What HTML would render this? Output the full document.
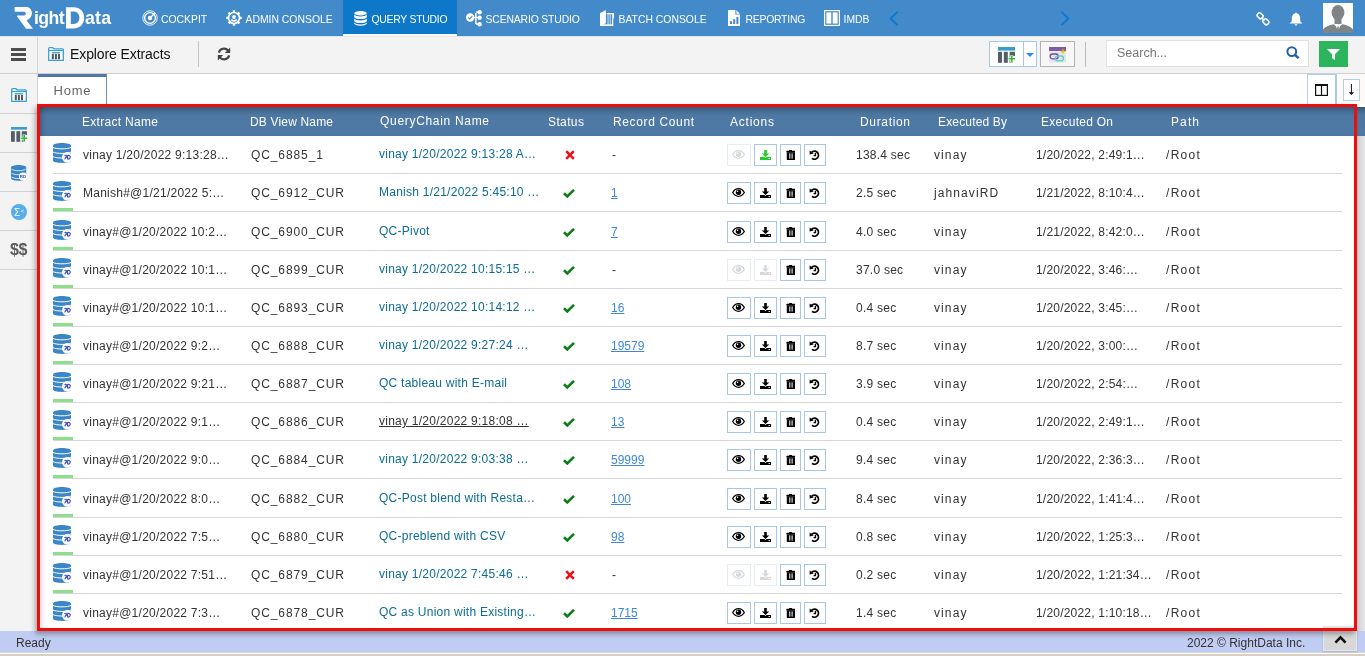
<!DOCTYPE html>
<html><head><meta charset="utf-8">
<style>
*{box-sizing:border-box}
html,body{margin:0;padding:0}
body{width:1365px;height:656px;overflow:hidden;position:relative;background:#f3f3f3;font-family:"Liberation Sans",sans-serif;color:#333}
.abs{position:absolute}
#nav{position:absolute;left:0;top:0;width:1365px;height:36px;background:#428ac9}
.ni{position:absolute;top:0;height:36px;color:#fff;font-size:10.5px;white-space:nowrap}
.ni .tx{position:absolute;top:14px;line-height:12px}
.ni svg{position:absolute}
#tb{position:absolute;left:0;top:36px;width:1365px;height:38px;background:#f3f3f3;border-top:1px solid #e6e6e6;border-bottom:1px solid #cfcfcf}
#side{position:absolute;left:0;top:74px;width:38px;height:558px;background:#f3f3f3;border-right:1px solid #d3d3d3}
.sep{position:absolute;left:0;width:37px;height:1px;background:#d3d3d3}
#tabs{position:absolute;left:38px;top:74px;width:1327px;height:30px;background:#fff}
#panel{position:absolute;left:37px;top:104px;width:1328px;height:528px;background:#fff}
#thead{position:absolute;left:40px;top:107px;width:1325px;height:29px;background:#4e79a4;box-shadow:inset 0 7px 6px -4px rgba(0,0,0,.32), inset 5px 0 5px -3px rgba(0,0,0,.22)}
.th{position:absolute;top:8px;color:#fff;font-size:12px;line-height:14px;white-space:nowrap}
#body{position:absolute;left:0;top:0;width:1365px;height:628px;overflow:hidden;clip-path:inset(135px 0 0 40px)}
.row{position:absolute;left:0;width:1342px;height:39px}
.row::after{content:"";position:absolute;left:53px;right:0;bottom:0;height:1px;background:#d6d6d6}
.t{position:absolute;top:13px;font-size:12px;line-height:14px;color:#333;white-space:nowrap;letter-spacing:0.25px}
.q{color:#0c6c96;top:12px}
.hov{color:#333;text-decoration:underline}
.lnk{color:#3f87dc;text-decoration:underline;letter-spacing:0}
#red{position:absolute;left:37px;top:104px;width:1320px;height:527px;border:3px solid #ee0d0d;box-shadow:-2px 3px 5px rgba(0,0,0,.32)}
#status{position:absolute;left:0;top:631px;width:1365px;height:21px;background:#c1ccf2}
#bottom{position:absolute;left:0;top:652px;width:1365px;height:4px;background:linear-gradient(#dbd6cd 0,#dbd6cd 1px,#fbfbfa 1px,#fbfbfa 2px,#d4d0c8 2px)}
#wrap{position:absolute;left:0;top:0;width:1365px;height:656px;overflow:hidden;will-change:transform}
</style></head><body><div id="wrap">

<!-- ============ NAV ============ -->
<div id="nav">
  <!-- logo -->
  <svg class="abs" style="left:0;top:0" width="40" height="36" viewBox="0 0 40 36"><path d="M14.6 7H26C29.5 7 31.9 9.5 31.9 13.2C31.9 16.5 29.8 19.2 26.5 20.2L32.9 28.8H26.1L17.1 16.4V15.5H24C25.3 15.5 25.8 14.5 25.8 13.6C25.8 12.5 25.2 11.7 24 11.7H14.6Z" fill="#fff"/></svg>
  <span class="abs" style="left:34px;top:8px;font-size:17.7px;font-weight:bold;color:#fff;letter-spacing:-0.6px;line-height:20px">ight</span>
  <svg class="abs" style="left:66px;top:7px" width="20" height="22" viewBox="0 0 20 22">
      <path d="M0 0.2H7.6C14 0.2 18.2 4.6 18.2 10.8S14 21.4 7.6 21.4H0Z M4.8 4.6V17H7.4C11.2 17 13.4 14.4 13.4 10.8S11.2 4.6 7.4 4.6Z" fill="#fff" fill-rule="evenodd"/>
  </svg>
  <span class="abs" style="left:85px;top:8px;font-size:17.7px;font-weight:bold;color:#fff;letter-spacing:0.2px;line-height:20px">ata</span>
  <!-- cockpit -->
  <div class="ni" style="left:142px;width:70px">
    <svg style="left:0;top:10px" width="16" height="16" viewBox="0 0 16 16"><circle cx="8" cy="8" r="7.2" fill="none" stroke="#fff" stroke-width="0.9"/><circle cx="8" cy="8" r="5.4" fill="none" stroke="#fff" stroke-width="1.4"/><circle cx="8" cy="8" r="2.2" fill="#fff"/><path d="M8 8L13 3" stroke="#fff" stroke-width="1.2"/></svg>
    <span class="tx" style="left:19px;font-size:10.4px">COCKPIT</span>
  </div>
  <!-- admin console -->
  <div class="ni" style="left:226px;width:112px">
    <svg style="left:0;top:9.5px" width="16" height="16" viewBox="0 0 16 16"><rect x="6.8" y="0.3" width="2.4" height="2.6" fill="#fff" transform="rotate(0 8 8)"/><rect x="6.8" y="0.3" width="2.4" height="2.6" fill="#fff" transform="rotate(45 8 8)"/><rect x="6.8" y="0.3" width="2.4" height="2.6" fill="#fff" transform="rotate(90 8 8)"/><rect x="6.8" y="0.3" width="2.4" height="2.6" fill="#fff" transform="rotate(135 8 8)"/><rect x="6.8" y="0.3" width="2.4" height="2.6" fill="#fff" transform="rotate(180 8 8)"/><rect x="6.8" y="0.3" width="2.4" height="2.6" fill="#fff" transform="rotate(225 8 8)"/><rect x="6.8" y="0.3" width="2.4" height="2.6" fill="#fff" transform="rotate(270 8 8)"/><rect x="6.8" y="0.3" width="2.4" height="2.6" fill="#fff" transform="rotate(315 8 8)"/><circle cx="8" cy="8" r="5.5" fill="none" stroke="#fff" stroke-width="1.7"/><circle cx="8" cy="7" r="1.9" fill="#fff"/><path d="M5.2 9.6Q8 12.2 10.8 9.6" fill="none" stroke="#fff" stroke-width="1.5"/></svg>
    <span class="tx" style="left:19.5px;font-size:10.4px">ADMIN CONSOLE</span>
  </div>
  <!-- query studio active -->
  <div class="ni" style="left:343px;width:114px;background:#0d77c9;border-bottom:2px solid #f5faff">
    <svg style="left:11px;top:11px" width="13" height="15" viewBox="0 0 13 15"><ellipse cx="6.5" cy="2.2" rx="6.3" ry="2.2" fill="#fff"/><path d="M0.2 3.6C1 4.9 3.6 5.5 6.5 5.5S12 4.9 12.8 3.6V6.2C12 7.5 9.4 8.1 6.5 8.1S1 7.5 0.2 6.2Z" fill="#fff"/><path d="M0.2 7.6C1 8.9 3.6 9.5 6.5 9.5S12 8.9 12.8 7.6V10.2C12 11.5 9.4 12.1 6.5 12.1S1 11.5 0.2 10.2Z" fill="#fff"/><path d="M0.2 11.6C1 12.9 3.6 13.5 6.5 13.5S12 12.9 12.8 11.6V12.8C12 14.1 9.4 14.8 6.5 14.8S1 14.1 0.2 12.8Z" fill="#fff"/></svg>
    <span class="tx" style="left:28.5px;font-size:10.4px;letter-spacing:-0.25px">QUERY STUDIO</span>
  </div>
  <!-- scenario studio -->
  <div class="ni" style="left:466px;width:120px">
    <svg style="left:0;top:9.5px" width="17" height="17" viewBox="0 0 17 17"><circle cx="4.2" cy="7.5" r="4.2" fill="#fff"/><path d="M2.3 7.5L3.7 8.9 6.2 6.2" stroke="#428ac9" stroke-width="1.1" fill="none"/><rect x="9" y="3" width="1.6" height="11" fill="#fff"/><path d="M8 7.5H12" stroke="#fff" stroke-width="1.2"/><circle cx="13.6" cy="2.2" r="2.2" fill="#fff"/><circle cx="13.6" cy="7.8" r="2.2" fill="#fff"/><circle cx="13.6" cy="14.2" r="2.2" fill="#fff"/><path d="M10 2.2H12M10 14.2H12" stroke="#fff" stroke-width="1.2"/></svg>
    <span class="tx" style="left:19.5px;font-size:10.4px;letter-spacing:-0.15px">SCENARIO STUDIO</span>
  </div>
  <!-- batch console -->
  <div class="ni" style="left:599px;width:112px">
    <svg style="left:0;top:10px" width="16" height="16" viewBox="0 0 16 16"><path d="M1 3.2L6.9 0V13.2L1 16Z" fill="#fff"/><rect x="7.6" y="3" width="7.4" height="1.4" fill="#fff"/><rect x="13.2" y="3" width="1.8" height="5.5" fill="#fff"/><rect x="13" y="8.5" width="1.2" height="7.5" fill="#fff"/><rect x="1" y="14.3" width="13.2" height="1.7" fill="#fff"/><rect x="8.4" y="4.4" width="1.3" height="10" fill="#fff" opacity=".6"/><rect x="10.6" y="4.4" width="1.3" height="10" fill="#fff" opacity=".6"/></svg>
    <span class="tx" style="left:19.5px;font-size:10.4px">BATCH CONSOLE</span>
  </div>
  <!-- reporting -->
  <div class="ni" style="left:728px;width:82px">
    <svg style="left:0;top:10px" width="12" height="16" viewBox="0 0 12 16"><path d="M0 0.4Q0 0 0.4 0H7.4V4.6H12V15.6Q12 16 11.6 16H0.4Q0 16 0 15.6Z" fill="#fff"/><path d="M8.4 0.3L11.9 3.7H8.4Z" fill="#fff"/><rect x="2" y="11.2" width="2" height="2.8" fill="#428ac9"/><rect x="5.2" y="9.2" width="2" height="4.8" fill="#428ac9"/><rect x="8.4" y="7" width="2" height="7" fill="#428ac9"/></svg>
    <span class="tx" style="left:17.5px;font-size:10.4px;letter-spacing:-0.23px">REPORTING</span>
  </div>
  <!-- imdb -->
  <div class="ni" style="left:824px;width:50px">
    <svg style="left:0;top:10px" width="16" height="16" viewBox="0 0 16 16"><rect x="0.6" y="0.6" width="14.8" height="14.8" fill="none" stroke="#fff" stroke-width="1.2"/><rect x="2.4" y="2.4" width="4.9" height="11.2" fill="#fff"/><rect x="8.7" y="2.4" width="4.9" height="11.2" fill="#fff"/></svg>
    <span class="tx" style="left:19.5px;font-size:10.4px">IMDB</span>
  </div>
  <!-- arrows -->
  <svg class="abs" style="left:889px;top:11px" width="10" height="15" viewBox="0 0 10 15"><path d="M8.5 0.8L1.6 7.5 8.5 14.2" fill="none" stroke="#0b78d1" stroke-width="1.8"/></svg>
  <svg class="abs" style="left:1060px;top:11px" width="10" height="15" viewBox="0 0 10 15"><path d="M1.5 0.8L8.4 7.5 1.5 14.2" fill="none" stroke="#0b78d1" stroke-width="1.8"/></svg>
  <!-- link -->
  <svg class="abs" style="left:1256px;top:12px" width="14" height="14" viewBox="0 0 14 14"><rect x="1.2" y="1.5" width="5.8" height="4.6" rx="1.6" transform="rotate(45 4.1 3.8)" fill="none" stroke="#fff" stroke-width="1.5"/><rect x="7" y="7.5" width="5.8" height="4.6" rx="1.6" transform="rotate(45 9.9 9.8)" fill="none" stroke="#fff" stroke-width="1.5"/><path d="M5.2 5.6L8.6 8.6" stroke="#fff" stroke-width="1.4"/></svg>
  <!-- bell -->
  <svg class="abs" style="left:1289px;top:11.5px" width="14" height="14" viewBox="0 0 14 14"><path d="M7 0.6C7.6 0.6 7.9 1 7.9 1.5 10.2 2 11.2 3.8 11.2 6.4V9.2L13.4 11.6H0.6L2.8 9.2V6.4C2.8 3.8 3.8 2 6.1 1.5 6.1 1 6.4 0.6 7 0.6Z" fill="#fff"/><path d="M5.6 12.3H8.4C8.4 13.1 7.8 13.6 7 13.6S5.6 13.1 5.6 12.3Z" fill="#fff"/></svg>
  <!-- avatar -->
  <div class="abs" style="left:1323px;top:3px;width:30px;height:30px;background:#fff;overflow:hidden">
    <svg width="30" height="30" viewBox="0 0 30 30"><ellipse cx="15" cy="9.6" rx="6.4" ry="7.6" fill="#7f8487"/><path d="M11.5 15.5H18.5V21H11.5Z" fill="#7f8487"/><path d="M0 26.5C2 23.6 6 22.3 10.5 21.3L15 24.5 19.5 21.3C24 22.3 28 23.6 30 26.5V30H0Z" fill="#7f8487"/><path d="M12.2 21.4L15 28 17.8 21.4 15 23.2Z" fill="#fff"/><path d="M14.3 23.4H15.7L16 28H14Z" fill="#7f8487"/></svg>
  </div>
</div>

<!-- ============ TOOLBAR ============ -->
<div id="tb">
  <div class="abs" style="left:37px;top:0;width:1px;height:37px;background:#d3d3d3"></div>
  <!-- hamburger -->
  <div class="abs" style="left:11px;top:11px;width:15px;height:3px;background:#4d4d4d"></div>
  <div class="abs" style="left:11px;top:16px;width:15px;height:3px;background:#4d4d4d"></div>
  <div class="abs" style="left:11px;top:21px;width:15px;height:3px;background:#4d4d4d"></div>
  <!-- explore icon -->
  <svg class="abs" style="left:48px;top:10px" width="16" height="14" viewBox="0 0 16 14"><path d="M0.7 13.3V1.6Q0.7 0.7 1.6 0.7H4.8L5.9 1.8H14.4Q15.3 1.8 15.3 2.7V13.3Z" fill="#fff" stroke="#3ba0cf" stroke-width="1.3"/><path d="M0.7 3.5H15.3" stroke="#3ba0cf" stroke-width="1.2"/><rect x="3.8" y="5.1" width="8.4" height="1.3" fill="#3ba0cf"/><rect x="3.8" y="6.9" width="2" height="5.4" fill="#4d5a60"/><rect x="6.9" y="6.9" width="2" height="5.4" fill="#4d5a60"/><rect x="10" y="6.9" width="2" height="5.4" fill="#4d5a60"/></svg>
  <span class="abs" style="left:70px;top:9px;font-size:14px;line-height:16px;color:#111;white-space:nowrap;letter-spacing:-0.1px">Explore Extracts</span>
  <div class="abs" style="left:198px;top:4px;width:1px;height:26px;background:#c5c5c5"></div>
  <!-- refresh -->
  <svg class="abs" style="left:217px;top:10px" width="14" height="14" viewBox="0 0 14 14"><path d="M1.8 5.6A5.4 5.4 0 0 1 11.2 3.6" fill="none" stroke="#444" stroke-width="2.2"/><path d="M13.2 0.6V6H7.8Z" fill="#444"/><path d="M12.2 8.4A5.4 5.4 0 0 1 2.8 10.4" fill="none" stroke="#444" stroke-width="2.2"/><path d="M0.8 13.4V8H6.2Z" fill="#444"/></svg>

  <!-- split button -->
  <div class="abs" style="left:989px;top:4px;width:48px;height:26px;border:1px solid #a7c8e6;background:#fff"></div>
  <div class="abs" style="left:1023px;top:5px;width:1px;height:24px;background:#a7c8e6"></div>
  <svg class="abs" style="left:998px;top:10px" width="18" height="16" viewBox="0 0 18 16"><rect x="0" y="0" width="17" height="3.6" fill="#3a9cc8"/><rect x="0" y="4.8" width="4" height="11" fill="#535f66"/><rect x="5.8" y="4.8" width="4" height="11" fill="#535f66"/><path d="M11.6 4.8H17V9H15V15.8H11.6Z" fill="#535f66"/><path d="M13.8 8.2V15.4M10.2 11.8H17.4" stroke="#fff" stroke-width="3"/><path d="M13.8 8.6V15M10.6 11.8H17" stroke="#2ec02e" stroke-width="1.6"/></svg>
  <svg class="abs" style="left:1026px;top:16px" width="8" height="4" viewBox="0 0 8 4"><path d="M0 0H8L4 4Z" fill="#2a8cf0"/></svg>
  <!-- chain button -->
  <div class="abs" style="left:1040px;top:4px;width:35px;height:26px;border:1px solid #b3b3b3;background:#f7f7f7"></div>
  <svg class="abs" style="left:1049px;top:10px" width="17" height="16" viewBox="0 0 17 16"><rect x="0" y="0" width="17" height="4" fill="#7a5ca8"/><rect x="0" y="4.5" width="17" height="11" fill="#e4e4e4"/><rect x="13" y="3.5" width="4" height="4" fill="#f3f3f3" opacity="0"/><path d="M14 1.6L14.8 3.6 16.8 4.4 14.8 5.2 14 7.2 13.2 5.2 11.2 4.4 13.2 3.6Z" fill="#f5b800"/><rect x="1.2" y="7" width="8" height="4.8" rx="2.4" fill="none" stroke="#7a45b0" stroke-width="1.3"/><rect x="6.4" y="9" width="8" height="4.8" rx="2.4" fill="none" stroke="#55d3c5" stroke-width="1.3"/></svg>
  <div class="abs" style="left:1085px;top:5px;width:1px;height:25px;background:#bdbdbd"></div>
  <!-- search -->
  <div class="abs" style="left:1106px;top:3px;width:203px;height:27px;border:1px solid #e0e0e0;background:#fff"></div>
  <span class="abs" style="left:1117px;top:9px;font-size:12.5px;line-height:14px;color:#777;white-space:nowrap">Search...</span>
  <svg class="abs" style="left:1286px;top:9px" width="15" height="13" viewBox="0 0 15 13"><circle cx="5.8" cy="5.6" r="4.4" fill="none" stroke="#2160ad" stroke-width="2"/><path d="M9 8.8L12.6 12.2" stroke="#2160ad" stroke-width="2.4"/></svg>
  <!-- filter -->
  <div class="abs" style="left:1319px;top:4px;width:29px;height:26px;background:#2db55d"></div>
  <svg class="abs" style="left:1327px;top:12px" width="13" height="11" viewBox="0 0 13 11"><path d="M0 0H13L8 5.2V11L5 9.2V5.2Z" fill="#fff"/></svg>
</div>

<!-- ============ SIDEBAR ============ -->
<div id="side">
  <svg class="abs" style="left:11px;top:14px" width="16" height="14" viewBox="0 0 16 14"><path d="M0.7 13.3V1.6Q0.7 0.7 1.6 0.7H4.8L5.9 1.8H14.4Q15.3 1.8 15.3 2.7V13.3Z" fill="#fff" stroke="#3ba0cf" stroke-width="1.3"/><path d="M0.7 3.5H15.3" stroke="#3ba0cf" stroke-width="1.2"/><rect x="3.8" y="5.1" width="8.4" height="1.3" fill="#3ba0cf"/><rect x="3.8" y="6.9" width="2" height="5.4" fill="#4d5a60"/><rect x="6.9" y="6.9" width="2" height="5.4" fill="#4d5a60"/><rect x="10" y="6.9" width="2" height="5.4" fill="#4d5a60"/></svg>
  <div class="sep" style="top:39px"></div>
  <svg class="abs" style="left:11px;top:52.5px" width="17" height="15" viewBox="0 0 17 15"><rect x="0" y="0" width="16" height="2.6" fill="#3a9cc8"/><rect x="0" y="4.2" width="3.8" height="10.6" fill="#535f66"/><rect x="5.4" y="4.2" width="3.8" height="10.6" fill="#535f66"/><path d="M10.8 4.2H16V8H14V14.8H10.8Z" fill="#535f66"/><path d="M13.2 7.6V14.6M9.8 11.2H16.6" stroke="#f3f3f3" stroke-width="3"/><path d="M13.2 8V14.2M10.2 11.2H16.2" stroke="#2ec02e" stroke-width="1.6"/></svg>
  <div class="sep" style="top:78px"></div>
  <svg class="abs" style="left:11px;top:91px" width="16" height="16" viewBox="0 0 20 20"><path d="M0 3.2C0 1.4 4.3 0 9.5 0S19 1.4 19 3.2V16.5C19 18.3 14.7 19.7 9.5 19.7S0 18.3 0 16.5Z" fill="#3a84c8"/><path d="M0.5 5.2C2.5 6.6 6 7.1 9.5 7.1S16.5 6.6 18.5 5.2M0.5 10.2C2.5 11.6 6 12.1 9.5 12.1S16.5 11.6 18.5 10.2M0.5 15C2.5 16.4 6 16.9 9.5 16.9S16.5 16.4 18.5 15" stroke="#f3f3f3" stroke-width="1.1" fill="none"/><circle cx="15" cy="14.5" r="5" fill="#fff"/><text x="15" y="16.6" font-size="5.5" text-anchor="middle" fill="#3344cc" font-family="Liberation Sans" font-weight="bold">RD</text></svg>
  <div class="sep" style="top:117px"></div>
  <svg class="abs" style="left:11px;top:129.5px" width="16" height="16" viewBox="0 0 16 16"><circle cx="8" cy="8" r="8" fill="#58aeea"/><text x="6" y="12" font-size="10" text-anchor="middle" fill="#fff" font-family="Liberation Sans">Σ</text><text x="11.5" y="9" font-size="6" text-anchor="middle" fill="#fff" font-family="Liberation Sans">&lt;</text></svg>
  <div class="sep" style="top:156px"></div>
  <span class="abs" style="left:10px;top:167px;font-size:16px;font-weight:bold;line-height:18px;color:#5c5c5c;letter-spacing:-0.3px">$$</span>
  <div class="sep" style="top:195px"></div>
</div>

<!-- ============ TABS ============ -->
<div id="tabs">
  <div class="abs" style="left:0;top:0;width:69px;height:30px;border-top:3px solid #4e79a4;border-right:1px solid #6f8fb3;background:#fff"></div>
  <span class="abs" style="left:15.5px;top:9px;font-size:13px;line-height:15px;color:#666;letter-spacing:0.8px">Home</span>
  <div class="abs" style="left:1269px;top:0;width:30px;height:30px;border:1px solid #b1cfe9;border-right:2px solid #a9c9e6;border-bottom:none;background:#fff"></div>
  <svg class="abs" style="left:1277px;top:10px" width="13" height="12" viewBox="0 0 13 12"><rect x="0.6" y="1" width="11.8" height="10.4" fill="none" stroke="#111" stroke-width="1.2"/><rect x="0" y="0" width="13" height="2" fill="#111"/><rect x="5.9" y="0.5" width="1.2" height="11" fill="#111"/></svg>
  <div class="abs" style="left:1299px;top:0;width:28px;height:30px;background:#fdf9f7"></div>
  <div class="abs" style="left:1305px;top:5px;width:17px;height:22px;border:1px solid #b1cfe9;background:#fff"></div>
  <svg class="abs" style="left:1309px;top:9px" width="8" height="13" viewBox="0 0 8 13"><path d="M4.4 1V10" stroke="#111" stroke-width="1"/><path d="M1.6 9.3H7.2L4.4 12.1Z" fill="#111"/></svg>
</div>

<!-- ============ PANEL ============ -->
<div id="panel"></div>
<div class="abs" style="left:1357px;top:135px;width:8px;height:497px;background:linear-gradient(to right,#cfd2d5,#e6e7e8)"></div>
<div id="thead"></div>
<div class="th" style="left:82px;top:115px;letter-spacing:0.3px">Extract Name</div>
<div class="th" style="left:250px;top:115px;letter-spacing:0.17px">DB View Name</div>
<div class="th" style="left:380px;top:114px;letter-spacing:0.69px">QueryChain Name</div>
<div class="th" style="left:548px;top:115px;letter-spacing:0.38px">Status</div>
<div class="th" style="left:613px;top:115px;letter-spacing:0.64px">Record Count</div>
<div class="th" style="left:730px;top:115px;letter-spacing:0.78px">Actions</div>
<div class="th" style="left:860px;top:115px;letter-spacing:0.67px">Duration</div>
<div class="th" style="left:938px;top:115px;letter-spacing:0.16px">Executed By</div>
<div class="th" style="left:1041px;top:115px;letter-spacing:0.26px">Executed On</div>
<div class="th" style="left:1171px;top:115px;letter-spacing:1.1px">Path</div>

<div class="abs" style="left:40px;top:136px;width:6px;height:492px;background:linear-gradient(to right,rgba(0,0,0,.10),rgba(0,0,0,0))"></div>
<div id="body">
<div class="row" style="top:135px">
<svg style="position:absolute;left:53px;top:8px" width="18" height="20" viewBox="0 0 18 20">
<path d="M0 2.4C0 1 4 0 9 0S18 1 18 2.4V17.6C18 19 14 20 9 20S0 19 0 17.6Z" fill="#3b86c6"/>
<path d="M0 4.4C3 6.3 15 6.3 18 4.4M0 9C3 10.9 15 10.9 18 9M0 13.6C3 15.5 15 15.5 18 13.6" stroke="#fff" stroke-width="1" fill="none"/>
<circle cx="14.2" cy="14.2" r="5.2" fill="#fff"/>
<path d="M11.4 12.6C12.4 11.9 13.6 12.2 13.4 13.2 13.2 14.2 12.2 15 11.8 16.3M12.2 14.3H14.2M14.6 12.3V16.2M14.6 12.3C16.8 12.1 17.4 13.2 17.2 14.3 17 15.6 15.8 16.3 14.6 16.2" stroke="#3747c8" stroke-width="1.1" fill="none"/>
</svg>
<span class="t" style="left:83px">vinay 1/20/2022 9:13:28…</span>
<span class="t" style="left:251px;letter-spacing:0.9px">QC_6885_1</span>
<span class="t q" style="left:379px">vinay 1/20/2022 9:13:28 A…</span>
<svg style="position:absolute;left:565px;top:15px" width="10" height="10" viewBox="0 0 10 10"><path d="M1.2 1.2L8.8 8.8M8.8 1.2L1.2 8.8" stroke="#e8141b" stroke-width="2.6"/></svg>
<span class="t" style="left:612px">-</span>
<div style="position:absolute;left:727px;top:9px;width:24px;height:22px;border:1px solid #e8eef6;background:#fff"><div style="position:absolute;left:4px;top:5px;width:13px;height:9px;line-height:0"><svg width="13" height="9" viewBox="0 0 13 9"><path d="M0.7 4.5C2.2 1.9 4.2 0.7 6.5 0.7S10.8 1.9 12.3 4.5C10.8 7.1 8.8 8.3 6.5 8.3S2.2 7.1 0.7 4.5Z" fill="none" stroke="#d9d9d9" stroke-width="1.3"/><circle cx="6.5" cy="4.2" r="2.7" fill="#d9d9d9"/><circle cx="5.6" cy="3.2" r="0.8" fill="#fff"/></svg></div></div>
<div style="position:absolute;left:754px;top:9px;width:23px;height:22px;border:1px solid #a9c6e4;background:#fff"><div style="position:absolute;left:5px;top:5px;width:11px;height:10px;line-height:0"><svg width="11" height="10" viewBox="0 0 11 10"><path d="M4.2 0H6.8V3.4H9.2L5.5 7.1 1.8 3.4H4.2Z" fill="#22cc22"/><path d="M0 6.9H4.4L5.5 7.9 6.6 6.9H11V10H0Z" fill="#22cc22"/><rect x="8.6" y="8" width="1.2" height="1" fill="#fff"/></svg></div></div>
<div style="position:absolute;left:780px;top:9px;width:21px;height:22px;border:1px solid #a9c6e4;background:#fff"><div style="position:absolute;left:5px;top:5px;width:9px;height:10px;line-height:0"><svg width="9" height="10" viewBox="0 0 9 10"><path d="M0 2.2L0.8 0.8H3L3.4 0H5.8L6.2 0.8H9V2.2Z" fill="#000"/><path d="M0.8 2.2H9V10H0.8Z" fill="#000"/><rect x="3.3" y="3.4" width="1" height="5.2" fill="#fff"/><rect x="5.6" y="3.4" width="1" height="5.2" fill="#fff"/></svg></div></div>
<div style="position:absolute;left:804px;top:9px;width:22px;height:22px;border:1px solid #a9c6e4;background:#fff"><div style="position:absolute;left:4px;top:5px;width:11px;height:10px;line-height:0"><svg width="11" height="10" viewBox="0 0 11 10"><path d="M2.6 2.4A4 4 0 1 1 3 8.4" fill="none" stroke="#000" stroke-width="1.8"/><path d="M0.6 0.4L4.6 3.6 0.6 4.4Z" fill="#000"/><path d="M6.4 3V5.6H4.6" fill="none" stroke="#000" stroke-width="1.4"/></svg></div></div>
<span class="t" style="left:856px">138.4 sec</span>
<span class="t" style="left:934px;letter-spacing:1.1px">vinay</span>
<span class="t" style="left:1036px;letter-spacing:0.2px">1/20/2022, 2:49:1…</span>
<span class="t" style="left:1166px;letter-spacing:1.3px">/Root</span>
</div>
<div class="row" style="top:173px">
<svg style="position:absolute;left:53px;top:8px" width="18" height="20" viewBox="0 0 18 20">
<path d="M0 2.4C0 1 4 0 9 0S18 1 18 2.4V17.6C18 19 14 20 9 20S0 19 0 17.6Z" fill="#3b86c6"/>
<path d="M0 4.4C3 6.3 15 6.3 18 4.4M0 9C3 10.9 15 10.9 18 9M0 13.6C3 15.5 15 15.5 18 13.6" stroke="#fff" stroke-width="1" fill="none"/>
<circle cx="14.2" cy="14.2" r="5.2" fill="#fff"/>
<path d="M11.4 12.6C12.4 11.9 13.6 12.2 13.4 13.2 13.2 14.2 12.2 15 11.8 16.3M12.2 14.3H14.2M14.6 12.3V16.2M14.6 12.3C16.8 12.1 17.4 13.2 17.2 14.3 17 15.6 15.8 16.3 14.6 16.2" stroke="#3747c8" stroke-width="1.1" fill="none"/>
</svg>
<div style="position:absolute;left:53px;top:35px;width:20px;height:3px;background:#8ce08c"></div>
<span class="t" style="left:83px">Manish#@1/21/2022 5:…</span>
<span class="t" style="left:251px;letter-spacing:0.9px">QC_6912_CUR</span>
<span class="t q" style="left:379px">Manish 1/21/2022 5:45:10 …</span>
<svg style="position:absolute;left:563px;top:16px" width="12" height="9" viewBox="0 0 12 9"><path d="M1 4.3L4.3 7.4 11 0.9" fill="none" stroke="#0a7d14" stroke-width="2.6"/></svg>
<span class="t lnk" style="left:611px">1</span>
<div style="position:absolute;left:727px;top:9px;width:24px;height:22px;border:1px solid #a9c6e4;background:#fff"><div style="position:absolute;left:4px;top:5px;width:13px;height:9px;line-height:0"><svg width="13" height="9" viewBox="0 0 13 9"><path d="M0.7 4.5C2.2 1.9 4.2 0.7 6.5 0.7S10.8 1.9 12.3 4.5C10.8 7.1 8.8 8.3 6.5 8.3S2.2 7.1 0.7 4.5Z" fill="none" stroke="#000" stroke-width="1.3"/><circle cx="6.5" cy="4.2" r="2.7" fill="#000"/><circle cx="5.6" cy="3.2" r="0.8" fill="#fff"/></svg></div></div>
<div style="position:absolute;left:754px;top:9px;width:23px;height:22px;border:1px solid #a9c6e4;background:#fff"><div style="position:absolute;left:5px;top:5px;width:11px;height:10px;line-height:0"><svg width="11" height="10" viewBox="0 0 11 10"><path d="M4.2 0H6.8V3.4H9.2L5.5 7.1 1.8 3.4H4.2Z" fill="#000"/><path d="M0 6.9H4.4L5.5 7.9 6.6 6.9H11V10H0Z" fill="#000"/><rect x="8.6" y="8" width="1.2" height="1" fill="#fff"/></svg></div></div>
<div style="position:absolute;left:780px;top:9px;width:21px;height:22px;border:1px solid #a9c6e4;background:#fff"><div style="position:absolute;left:5px;top:5px;width:9px;height:10px;line-height:0"><svg width="9" height="10" viewBox="0 0 9 10"><path d="M0 2.2L0.8 0.8H3L3.4 0H5.8L6.2 0.8H9V2.2Z" fill="#000"/><path d="M0.8 2.2H9V10H0.8Z" fill="#000"/><rect x="3.3" y="3.4" width="1" height="5.2" fill="#fff"/><rect x="5.6" y="3.4" width="1" height="5.2" fill="#fff"/></svg></div></div>
<div style="position:absolute;left:804px;top:9px;width:22px;height:22px;border:1px solid #a9c6e4;background:#fff"><div style="position:absolute;left:4px;top:5px;width:11px;height:10px;line-height:0"><svg width="11" height="10" viewBox="0 0 11 10"><path d="M2.6 2.4A4 4 0 1 1 3 8.4" fill="none" stroke="#000" stroke-width="1.8"/><path d="M0.6 0.4L4.6 3.6 0.6 4.4Z" fill="#000"/><path d="M6.4 3V5.6H4.6" fill="none" stroke="#000" stroke-width="1.4"/></svg></div></div>
<span class="t" style="left:856px">2.5 sec</span>
<span class="t" style="left:934px;letter-spacing:1.1px">jahnaviRD</span>
<span class="t" style="left:1036px;letter-spacing:0.2px">1/21/2022, 8:10:4…</span>
<span class="t" style="left:1166px;letter-spacing:1.3px">/Root</span>
</div>
<div class="row" style="top:212px">
<svg style="position:absolute;left:53px;top:8px" width="18" height="20" viewBox="0 0 18 20">
<path d="M0 2.4C0 1 4 0 9 0S18 1 18 2.4V17.6C18 19 14 20 9 20S0 19 0 17.6Z" fill="#3b86c6"/>
<path d="M0 4.4C3 6.3 15 6.3 18 4.4M0 9C3 10.9 15 10.9 18 9M0 13.6C3 15.5 15 15.5 18 13.6" stroke="#fff" stroke-width="1" fill="none"/>
<circle cx="14.2" cy="14.2" r="5.2" fill="#fff"/>
<path d="M11.4 12.6C12.4 11.9 13.6 12.2 13.4 13.2 13.2 14.2 12.2 15 11.8 16.3M12.2 14.3H14.2M14.6 12.3V16.2M14.6 12.3C16.8 12.1 17.4 13.2 17.2 14.3 17 15.6 15.8 16.3 14.6 16.2" stroke="#3747c8" stroke-width="1.1" fill="none"/>
</svg>
<div style="position:absolute;left:53px;top:35px;width:20px;height:3px;background:#8ce08c"></div>
<span class="t" style="left:83px">vinay#@1/20/2022 10:2…</span>
<span class="t" style="left:251px;letter-spacing:0.9px">QC_6900_CUR</span>
<span class="t q" style="left:379px">QC-Pivot</span>
<svg style="position:absolute;left:563px;top:16px" width="12" height="9" viewBox="0 0 12 9"><path d="M1 4.3L4.3 7.4 11 0.9" fill="none" stroke="#0a7d14" stroke-width="2.6"/></svg>
<span class="t lnk" style="left:611px">7</span>
<div style="position:absolute;left:727px;top:9px;width:24px;height:22px;border:1px solid #a9c6e4;background:#fff"><div style="position:absolute;left:4px;top:5px;width:13px;height:9px;line-height:0"><svg width="13" height="9" viewBox="0 0 13 9"><path d="M0.7 4.5C2.2 1.9 4.2 0.7 6.5 0.7S10.8 1.9 12.3 4.5C10.8 7.1 8.8 8.3 6.5 8.3S2.2 7.1 0.7 4.5Z" fill="none" stroke="#000" stroke-width="1.3"/><circle cx="6.5" cy="4.2" r="2.7" fill="#000"/><circle cx="5.6" cy="3.2" r="0.8" fill="#fff"/></svg></div></div>
<div style="position:absolute;left:754px;top:9px;width:23px;height:22px;border:1px solid #a9c6e4;background:#fff"><div style="position:absolute;left:5px;top:5px;width:11px;height:10px;line-height:0"><svg width="11" height="10" viewBox="0 0 11 10"><path d="M4.2 0H6.8V3.4H9.2L5.5 7.1 1.8 3.4H4.2Z" fill="#000"/><path d="M0 6.9H4.4L5.5 7.9 6.6 6.9H11V10H0Z" fill="#000"/><rect x="8.6" y="8" width="1.2" height="1" fill="#fff"/></svg></div></div>
<div style="position:absolute;left:780px;top:9px;width:21px;height:22px;border:1px solid #a9c6e4;background:#fff"><div style="position:absolute;left:5px;top:5px;width:9px;height:10px;line-height:0"><svg width="9" height="10" viewBox="0 0 9 10"><path d="M0 2.2L0.8 0.8H3L3.4 0H5.8L6.2 0.8H9V2.2Z" fill="#000"/><path d="M0.8 2.2H9V10H0.8Z" fill="#000"/><rect x="3.3" y="3.4" width="1" height="5.2" fill="#fff"/><rect x="5.6" y="3.4" width="1" height="5.2" fill="#fff"/></svg></div></div>
<div style="position:absolute;left:804px;top:9px;width:22px;height:22px;border:1px solid #a9c6e4;background:#fff"><div style="position:absolute;left:4px;top:5px;width:11px;height:10px;line-height:0"><svg width="11" height="10" viewBox="0 0 11 10"><path d="M2.6 2.4A4 4 0 1 1 3 8.4" fill="none" stroke="#000" stroke-width="1.8"/><path d="M0.6 0.4L4.6 3.6 0.6 4.4Z" fill="#000"/><path d="M6.4 3V5.6H4.6" fill="none" stroke="#000" stroke-width="1.4"/></svg></div></div>
<span class="t" style="left:856px">4.0 sec</span>
<span class="t" style="left:934px;letter-spacing:1.1px">vinay</span>
<span class="t" style="left:1036px;letter-spacing:0.2px">1/21/2022, 8:42:0…</span>
<span class="t" style="left:1166px;letter-spacing:1.3px">/Root</span>
</div>
<div class="row" style="top:250px">
<svg style="position:absolute;left:53px;top:8px" width="18" height="20" viewBox="0 0 18 20">
<path d="M0 2.4C0 1 4 0 9 0S18 1 18 2.4V17.6C18 19 14 20 9 20S0 19 0 17.6Z" fill="#3b86c6"/>
<path d="M0 4.4C3 6.3 15 6.3 18 4.4M0 9C3 10.9 15 10.9 18 9M0 13.6C3 15.5 15 15.5 18 13.6" stroke="#fff" stroke-width="1" fill="none"/>
<circle cx="14.2" cy="14.2" r="5.2" fill="#fff"/>
<path d="M11.4 12.6C12.4 11.9 13.6 12.2 13.4 13.2 13.2 14.2 12.2 15 11.8 16.3M12.2 14.3H14.2M14.6 12.3V16.2M14.6 12.3C16.8 12.1 17.4 13.2 17.2 14.3 17 15.6 15.8 16.3 14.6 16.2" stroke="#3747c8" stroke-width="1.1" fill="none"/>
</svg>
<div style="position:absolute;left:53px;top:35px;width:20px;height:3px;background:#8ce08c"></div>
<span class="t" style="left:83px">vinay#@1/20/2022 10:1…</span>
<span class="t" style="left:251px;letter-spacing:0.9px">QC_6899_CUR</span>
<span class="t q" style="left:379px">vinay 1/20/2022 10:15:15 …</span>
<svg style="position:absolute;left:563px;top:16px" width="12" height="9" viewBox="0 0 12 9"><path d="M1 4.3L4.3 7.4 11 0.9" fill="none" stroke="#0a7d14" stroke-width="2.6"/></svg>
<span class="t" style="left:612px">-</span>
<div style="position:absolute;left:727px;top:9px;width:24px;height:22px;border:1px solid #e8eef6;background:#fff"><div style="position:absolute;left:4px;top:5px;width:13px;height:9px;line-height:0"><svg width="13" height="9" viewBox="0 0 13 9"><path d="M0.7 4.5C2.2 1.9 4.2 0.7 6.5 0.7S10.8 1.9 12.3 4.5C10.8 7.1 8.8 8.3 6.5 8.3S2.2 7.1 0.7 4.5Z" fill="none" stroke="#d9d9d9" stroke-width="1.3"/><circle cx="6.5" cy="4.2" r="2.7" fill="#d9d9d9"/><circle cx="5.6" cy="3.2" r="0.8" fill="#fff"/></svg></div></div>
<div style="position:absolute;left:754px;top:9px;width:23px;height:22px;border:1px solid #e8eef6;background:#fff"><div style="position:absolute;left:5px;top:5px;width:11px;height:10px;line-height:0"><svg width="11" height="10" viewBox="0 0 11 10"><path d="M4.2 0H6.8V3.4H9.2L5.5 7.1 1.8 3.4H4.2Z" fill="#d9d9d9"/><path d="M0 6.9H4.4L5.5 7.9 6.6 6.9H11V10H0Z" fill="#d9d9d9"/><rect x="8.6" y="8" width="1.2" height="1" fill="#fff"/></svg></div></div>
<div style="position:absolute;left:780px;top:9px;width:21px;height:22px;border:1px solid #a9c6e4;background:#fff"><div style="position:absolute;left:5px;top:5px;width:9px;height:10px;line-height:0"><svg width="9" height="10" viewBox="0 0 9 10"><path d="M0 2.2L0.8 0.8H3L3.4 0H5.8L6.2 0.8H9V2.2Z" fill="#000"/><path d="M0.8 2.2H9V10H0.8Z" fill="#000"/><rect x="3.3" y="3.4" width="1" height="5.2" fill="#fff"/><rect x="5.6" y="3.4" width="1" height="5.2" fill="#fff"/></svg></div></div>
<div style="position:absolute;left:804px;top:9px;width:22px;height:22px;border:1px solid #a9c6e4;background:#fff"><div style="position:absolute;left:4px;top:5px;width:11px;height:10px;line-height:0"><svg width="11" height="10" viewBox="0 0 11 10"><path d="M2.6 2.4A4 4 0 1 1 3 8.4" fill="none" stroke="#000" stroke-width="1.8"/><path d="M0.6 0.4L4.6 3.6 0.6 4.4Z" fill="#000"/><path d="M6.4 3V5.6H4.6" fill="none" stroke="#000" stroke-width="1.4"/></svg></div></div>
<span class="t" style="left:856px">37.0 sec</span>
<span class="t" style="left:934px;letter-spacing:1.1px">vinay</span>
<span class="t" style="left:1036px;letter-spacing:0.2px">1/20/2022, 3:46:…</span>
<span class="t" style="left:1166px;letter-spacing:1.3px">/Root</span>
</div>
<div class="row" style="top:288px">
<svg style="position:absolute;left:53px;top:8px" width="18" height="20" viewBox="0 0 18 20">
<path d="M0 2.4C0 1 4 0 9 0S18 1 18 2.4V17.6C18 19 14 20 9 20S0 19 0 17.6Z" fill="#3b86c6"/>
<path d="M0 4.4C3 6.3 15 6.3 18 4.4M0 9C3 10.9 15 10.9 18 9M0 13.6C3 15.5 15 15.5 18 13.6" stroke="#fff" stroke-width="1" fill="none"/>
<circle cx="14.2" cy="14.2" r="5.2" fill="#fff"/>
<path d="M11.4 12.6C12.4 11.9 13.6 12.2 13.4 13.2 13.2 14.2 12.2 15 11.8 16.3M12.2 14.3H14.2M14.6 12.3V16.2M14.6 12.3C16.8 12.1 17.4 13.2 17.2 14.3 17 15.6 15.8 16.3 14.6 16.2" stroke="#3747c8" stroke-width="1.1" fill="none"/>
</svg>
<div style="position:absolute;left:53px;top:35px;width:20px;height:3px;background:#8ce08c"></div>
<span class="t" style="left:83px">vinay#@1/20/2022 10:1…</span>
<span class="t" style="left:251px;letter-spacing:0.9px">QC_6893_CUR</span>
<span class="t q" style="left:379px">vinay 1/20/2022 10:14:12 …</span>
<svg style="position:absolute;left:563px;top:16px" width="12" height="9" viewBox="0 0 12 9"><path d="M1 4.3L4.3 7.4 11 0.9" fill="none" stroke="#0a7d14" stroke-width="2.6"/></svg>
<span class="t lnk" style="left:611px">16</span>
<div style="position:absolute;left:727px;top:9px;width:24px;height:22px;border:1px solid #a9c6e4;background:#fff"><div style="position:absolute;left:4px;top:5px;width:13px;height:9px;line-height:0"><svg width="13" height="9" viewBox="0 0 13 9"><path d="M0.7 4.5C2.2 1.9 4.2 0.7 6.5 0.7S10.8 1.9 12.3 4.5C10.8 7.1 8.8 8.3 6.5 8.3S2.2 7.1 0.7 4.5Z" fill="none" stroke="#000" stroke-width="1.3"/><circle cx="6.5" cy="4.2" r="2.7" fill="#000"/><circle cx="5.6" cy="3.2" r="0.8" fill="#fff"/></svg></div></div>
<div style="position:absolute;left:754px;top:9px;width:23px;height:22px;border:1px solid #a9c6e4;background:#fff"><div style="position:absolute;left:5px;top:5px;width:11px;height:10px;line-height:0"><svg width="11" height="10" viewBox="0 0 11 10"><path d="M4.2 0H6.8V3.4H9.2L5.5 7.1 1.8 3.4H4.2Z" fill="#000"/><path d="M0 6.9H4.4L5.5 7.9 6.6 6.9H11V10H0Z" fill="#000"/><rect x="8.6" y="8" width="1.2" height="1" fill="#fff"/></svg></div></div>
<div style="position:absolute;left:780px;top:9px;width:21px;height:22px;border:1px solid #a9c6e4;background:#fff"><div style="position:absolute;left:5px;top:5px;width:9px;height:10px;line-height:0"><svg width="9" height="10" viewBox="0 0 9 10"><path d="M0 2.2L0.8 0.8H3L3.4 0H5.8L6.2 0.8H9V2.2Z" fill="#000"/><path d="M0.8 2.2H9V10H0.8Z" fill="#000"/><rect x="3.3" y="3.4" width="1" height="5.2" fill="#fff"/><rect x="5.6" y="3.4" width="1" height="5.2" fill="#fff"/></svg></div></div>
<div style="position:absolute;left:804px;top:9px;width:22px;height:22px;border:1px solid #a9c6e4;background:#fff"><div style="position:absolute;left:4px;top:5px;width:11px;height:10px;line-height:0"><svg width="11" height="10" viewBox="0 0 11 10"><path d="M2.6 2.4A4 4 0 1 1 3 8.4" fill="none" stroke="#000" stroke-width="1.8"/><path d="M0.6 0.4L4.6 3.6 0.6 4.4Z" fill="#000"/><path d="M6.4 3V5.6H4.6" fill="none" stroke="#000" stroke-width="1.4"/></svg></div></div>
<span class="t" style="left:856px">0.4 sec</span>
<span class="t" style="left:934px;letter-spacing:1.1px">vinay</span>
<span class="t" style="left:1036px;letter-spacing:0.2px">1/20/2022, 3:45:…</span>
<span class="t" style="left:1166px;letter-spacing:1.3px">/Root</span>
</div>
<div class="row" style="top:326px">
<svg style="position:absolute;left:53px;top:8px" width="18" height="20" viewBox="0 0 18 20">
<path d="M0 2.4C0 1 4 0 9 0S18 1 18 2.4V17.6C18 19 14 20 9 20S0 19 0 17.6Z" fill="#3b86c6"/>
<path d="M0 4.4C3 6.3 15 6.3 18 4.4M0 9C3 10.9 15 10.9 18 9M0 13.6C3 15.5 15 15.5 18 13.6" stroke="#fff" stroke-width="1" fill="none"/>
<circle cx="14.2" cy="14.2" r="5.2" fill="#fff"/>
<path d="M11.4 12.6C12.4 11.9 13.6 12.2 13.4 13.2 13.2 14.2 12.2 15 11.8 16.3M12.2 14.3H14.2M14.6 12.3V16.2M14.6 12.3C16.8 12.1 17.4 13.2 17.2 14.3 17 15.6 15.8 16.3 14.6 16.2" stroke="#3747c8" stroke-width="1.1" fill="none"/>
</svg>
<div style="position:absolute;left:53px;top:35px;width:20px;height:3px;background:#8ce08c"></div>
<span class="t" style="left:83px">vinay#@1/20/2022 9:2…</span>
<span class="t" style="left:251px;letter-spacing:0.9px">QC_6888_CUR</span>
<span class="t q" style="left:379px">vinay 1/20/2022 9:27:24 …</span>
<svg style="position:absolute;left:563px;top:16px" width="12" height="9" viewBox="0 0 12 9"><path d="M1 4.3L4.3 7.4 11 0.9" fill="none" stroke="#0a7d14" stroke-width="2.6"/></svg>
<span class="t lnk" style="left:611px">19579</span>
<div style="position:absolute;left:727px;top:9px;width:24px;height:22px;border:1px solid #a9c6e4;background:#fff"><div style="position:absolute;left:4px;top:5px;width:13px;height:9px;line-height:0"><svg width="13" height="9" viewBox="0 0 13 9"><path d="M0.7 4.5C2.2 1.9 4.2 0.7 6.5 0.7S10.8 1.9 12.3 4.5C10.8 7.1 8.8 8.3 6.5 8.3S2.2 7.1 0.7 4.5Z" fill="none" stroke="#000" stroke-width="1.3"/><circle cx="6.5" cy="4.2" r="2.7" fill="#000"/><circle cx="5.6" cy="3.2" r="0.8" fill="#fff"/></svg></div></div>
<div style="position:absolute;left:754px;top:9px;width:23px;height:22px;border:1px solid #a9c6e4;background:#fff"><div style="position:absolute;left:5px;top:5px;width:11px;height:10px;line-height:0"><svg width="11" height="10" viewBox="0 0 11 10"><path d="M4.2 0H6.8V3.4H9.2L5.5 7.1 1.8 3.4H4.2Z" fill="#000"/><path d="M0 6.9H4.4L5.5 7.9 6.6 6.9H11V10H0Z" fill="#000"/><rect x="8.6" y="8" width="1.2" height="1" fill="#fff"/></svg></div></div>
<div style="position:absolute;left:780px;top:9px;width:21px;height:22px;border:1px solid #a9c6e4;background:#fff"><div style="position:absolute;left:5px;top:5px;width:9px;height:10px;line-height:0"><svg width="9" height="10" viewBox="0 0 9 10"><path d="M0 2.2L0.8 0.8H3L3.4 0H5.8L6.2 0.8H9V2.2Z" fill="#000"/><path d="M0.8 2.2H9V10H0.8Z" fill="#000"/><rect x="3.3" y="3.4" width="1" height="5.2" fill="#fff"/><rect x="5.6" y="3.4" width="1" height="5.2" fill="#fff"/></svg></div></div>
<div style="position:absolute;left:804px;top:9px;width:22px;height:22px;border:1px solid #a9c6e4;background:#fff"><div style="position:absolute;left:4px;top:5px;width:11px;height:10px;line-height:0"><svg width="11" height="10" viewBox="0 0 11 10"><path d="M2.6 2.4A4 4 0 1 1 3 8.4" fill="none" stroke="#000" stroke-width="1.8"/><path d="M0.6 0.4L4.6 3.6 0.6 4.4Z" fill="#000"/><path d="M6.4 3V5.6H4.6" fill="none" stroke="#000" stroke-width="1.4"/></svg></div></div>
<span class="t" style="left:856px">8.7 sec</span>
<span class="t" style="left:934px;letter-spacing:1.1px">vinay</span>
<span class="t" style="left:1036px;letter-spacing:0.2px">1/20/2022, 3:00:…</span>
<span class="t" style="left:1166px;letter-spacing:1.3px">/Root</span>
</div>
<div class="row" style="top:364px">
<svg style="position:absolute;left:53px;top:8px" width="18" height="20" viewBox="0 0 18 20">
<path d="M0 2.4C0 1 4 0 9 0S18 1 18 2.4V17.6C18 19 14 20 9 20S0 19 0 17.6Z" fill="#3b86c6"/>
<path d="M0 4.4C3 6.3 15 6.3 18 4.4M0 9C3 10.9 15 10.9 18 9M0 13.6C3 15.5 15 15.5 18 13.6" stroke="#fff" stroke-width="1" fill="none"/>
<circle cx="14.2" cy="14.2" r="5.2" fill="#fff"/>
<path d="M11.4 12.6C12.4 11.9 13.6 12.2 13.4 13.2 13.2 14.2 12.2 15 11.8 16.3M12.2 14.3H14.2M14.6 12.3V16.2M14.6 12.3C16.8 12.1 17.4 13.2 17.2 14.3 17 15.6 15.8 16.3 14.6 16.2" stroke="#3747c8" stroke-width="1.1" fill="none"/>
</svg>
<div style="position:absolute;left:53px;top:35px;width:20px;height:3px;background:#8ce08c"></div>
<span class="t" style="left:83px">vinay#@1/20/2022 9:21…</span>
<span class="t" style="left:251px;letter-spacing:0.9px">QC_6887_CUR</span>
<span class="t q" style="left:379px">QC tableau with E-mail</span>
<svg style="position:absolute;left:563px;top:16px" width="12" height="9" viewBox="0 0 12 9"><path d="M1 4.3L4.3 7.4 11 0.9" fill="none" stroke="#0a7d14" stroke-width="2.6"/></svg>
<span class="t lnk" style="left:611px">108</span>
<div style="position:absolute;left:727px;top:9px;width:24px;height:22px;border:1px solid #a9c6e4;background:#fff"><div style="position:absolute;left:4px;top:5px;width:13px;height:9px;line-height:0"><svg width="13" height="9" viewBox="0 0 13 9"><path d="M0.7 4.5C2.2 1.9 4.2 0.7 6.5 0.7S10.8 1.9 12.3 4.5C10.8 7.1 8.8 8.3 6.5 8.3S2.2 7.1 0.7 4.5Z" fill="none" stroke="#000" stroke-width="1.3"/><circle cx="6.5" cy="4.2" r="2.7" fill="#000"/><circle cx="5.6" cy="3.2" r="0.8" fill="#fff"/></svg></div></div>
<div style="position:absolute;left:754px;top:9px;width:23px;height:22px;border:1px solid #a9c6e4;background:#fff"><div style="position:absolute;left:5px;top:5px;width:11px;height:10px;line-height:0"><svg width="11" height="10" viewBox="0 0 11 10"><path d="M4.2 0H6.8V3.4H9.2L5.5 7.1 1.8 3.4H4.2Z" fill="#000"/><path d="M0 6.9H4.4L5.5 7.9 6.6 6.9H11V10H0Z" fill="#000"/><rect x="8.6" y="8" width="1.2" height="1" fill="#fff"/></svg></div></div>
<div style="position:absolute;left:780px;top:9px;width:21px;height:22px;border:1px solid #a9c6e4;background:#fff"><div style="position:absolute;left:5px;top:5px;width:9px;height:10px;line-height:0"><svg width="9" height="10" viewBox="0 0 9 10"><path d="M0 2.2L0.8 0.8H3L3.4 0H5.8L6.2 0.8H9V2.2Z" fill="#000"/><path d="M0.8 2.2H9V10H0.8Z" fill="#000"/><rect x="3.3" y="3.4" width="1" height="5.2" fill="#fff"/><rect x="5.6" y="3.4" width="1" height="5.2" fill="#fff"/></svg></div></div>
<div style="position:absolute;left:804px;top:9px;width:22px;height:22px;border:1px solid #a9c6e4;background:#fff"><div style="position:absolute;left:4px;top:5px;width:11px;height:10px;line-height:0"><svg width="11" height="10" viewBox="0 0 11 10"><path d="M2.6 2.4A4 4 0 1 1 3 8.4" fill="none" stroke="#000" stroke-width="1.8"/><path d="M0.6 0.4L4.6 3.6 0.6 4.4Z" fill="#000"/><path d="M6.4 3V5.6H4.6" fill="none" stroke="#000" stroke-width="1.4"/></svg></div></div>
<span class="t" style="left:856px">3.9 sec</span>
<span class="t" style="left:934px;letter-spacing:1.1px">vinay</span>
<span class="t" style="left:1036px;letter-spacing:0.2px">1/20/2022, 2:54:…</span>
<span class="t" style="left:1166px;letter-spacing:1.3px">/Root</span>
</div>
<div class="row" style="top:402px">
<svg style="position:absolute;left:53px;top:8px" width="18" height="20" viewBox="0 0 18 20">
<path d="M0 2.4C0 1 4 0 9 0S18 1 18 2.4V17.6C18 19 14 20 9 20S0 19 0 17.6Z" fill="#3b86c6"/>
<path d="M0 4.4C3 6.3 15 6.3 18 4.4M0 9C3 10.9 15 10.9 18 9M0 13.6C3 15.5 15 15.5 18 13.6" stroke="#fff" stroke-width="1" fill="none"/>
<circle cx="14.2" cy="14.2" r="5.2" fill="#fff"/>
<path d="M11.4 12.6C12.4 11.9 13.6 12.2 13.4 13.2 13.2 14.2 12.2 15 11.8 16.3M12.2 14.3H14.2M14.6 12.3V16.2M14.6 12.3C16.8 12.1 17.4 13.2 17.2 14.3 17 15.6 15.8 16.3 14.6 16.2" stroke="#3747c8" stroke-width="1.1" fill="none"/>
</svg>
<div style="position:absolute;left:53px;top:35px;width:20px;height:3px;background:#8ce08c"></div>
<span class="t" style="left:83px">vinay#@1/20/2022 9:1…</span>
<span class="t" style="left:251px;letter-spacing:0.9px">QC_6886_CUR</span>
<span class="t q hov" style="left:379px">vinay 1/20/2022 9:18:08 …</span>
<svg style="position:absolute;left:563px;top:16px" width="12" height="9" viewBox="0 0 12 9"><path d="M1 4.3L4.3 7.4 11 0.9" fill="none" stroke="#0a7d14" stroke-width="2.6"/></svg>
<span class="t lnk" style="left:611px">13</span>
<div style="position:absolute;left:727px;top:9px;width:24px;height:22px;border:1px solid #a9c6e4;background:#fff"><div style="position:absolute;left:4px;top:5px;width:13px;height:9px;line-height:0"><svg width="13" height="9" viewBox="0 0 13 9"><path d="M0.7 4.5C2.2 1.9 4.2 0.7 6.5 0.7S10.8 1.9 12.3 4.5C10.8 7.1 8.8 8.3 6.5 8.3S2.2 7.1 0.7 4.5Z" fill="none" stroke="#000" stroke-width="1.3"/><circle cx="6.5" cy="4.2" r="2.7" fill="#000"/><circle cx="5.6" cy="3.2" r="0.8" fill="#fff"/></svg></div></div>
<div style="position:absolute;left:754px;top:9px;width:23px;height:22px;border:1px solid #a9c6e4;background:#fff"><div style="position:absolute;left:5px;top:5px;width:11px;height:10px;line-height:0"><svg width="11" height="10" viewBox="0 0 11 10"><path d="M4.2 0H6.8V3.4H9.2L5.5 7.1 1.8 3.4H4.2Z" fill="#000"/><path d="M0 6.9H4.4L5.5 7.9 6.6 6.9H11V10H0Z" fill="#000"/><rect x="8.6" y="8" width="1.2" height="1" fill="#fff"/></svg></div></div>
<div style="position:absolute;left:780px;top:9px;width:21px;height:22px;border:1px solid #a9c6e4;background:#fff"><div style="position:absolute;left:5px;top:5px;width:9px;height:10px;line-height:0"><svg width="9" height="10" viewBox="0 0 9 10"><path d="M0 2.2L0.8 0.8H3L3.4 0H5.8L6.2 0.8H9V2.2Z" fill="#000"/><path d="M0.8 2.2H9V10H0.8Z" fill="#000"/><rect x="3.3" y="3.4" width="1" height="5.2" fill="#fff"/><rect x="5.6" y="3.4" width="1" height="5.2" fill="#fff"/></svg></div></div>
<div style="position:absolute;left:804px;top:9px;width:22px;height:22px;border:1px solid #a9c6e4;background:#fff"><div style="position:absolute;left:4px;top:5px;width:11px;height:10px;line-height:0"><svg width="11" height="10" viewBox="0 0 11 10"><path d="M2.6 2.4A4 4 0 1 1 3 8.4" fill="none" stroke="#000" stroke-width="1.8"/><path d="M0.6 0.4L4.6 3.6 0.6 4.4Z" fill="#000"/><path d="M6.4 3V5.6H4.6" fill="none" stroke="#000" stroke-width="1.4"/></svg></div></div>
<span class="t" style="left:856px">0.4 sec</span>
<span class="t" style="left:934px;letter-spacing:1.1px">vinay</span>
<span class="t" style="left:1036px;letter-spacing:0.2px">1/20/2022, 2:49:1…</span>
<span class="t" style="left:1166px;letter-spacing:1.3px">/Root</span>
</div>
<div class="row" style="top:440px">
<svg style="position:absolute;left:53px;top:8px" width="18" height="20" viewBox="0 0 18 20">
<path d="M0 2.4C0 1 4 0 9 0S18 1 18 2.4V17.6C18 19 14 20 9 20S0 19 0 17.6Z" fill="#3b86c6"/>
<path d="M0 4.4C3 6.3 15 6.3 18 4.4M0 9C3 10.9 15 10.9 18 9M0 13.6C3 15.5 15 15.5 18 13.6" stroke="#fff" stroke-width="1" fill="none"/>
<circle cx="14.2" cy="14.2" r="5.2" fill="#fff"/>
<path d="M11.4 12.6C12.4 11.9 13.6 12.2 13.4 13.2 13.2 14.2 12.2 15 11.8 16.3M12.2 14.3H14.2M14.6 12.3V16.2M14.6 12.3C16.8 12.1 17.4 13.2 17.2 14.3 17 15.6 15.8 16.3 14.6 16.2" stroke="#3747c8" stroke-width="1.1" fill="none"/>
</svg>
<div style="position:absolute;left:53px;top:35px;width:20px;height:3px;background:#8ce08c"></div>
<span class="t" style="left:83px">vinay#@1/20/2022 9:0…</span>
<span class="t" style="left:251px;letter-spacing:0.9px">QC_6884_CUR</span>
<span class="t q" style="left:379px">vinay 1/20/2022 9:03:38 …</span>
<svg style="position:absolute;left:563px;top:16px" width="12" height="9" viewBox="0 0 12 9"><path d="M1 4.3L4.3 7.4 11 0.9" fill="none" stroke="#0a7d14" stroke-width="2.6"/></svg>
<span class="t lnk" style="left:611px">59999</span>
<div style="position:absolute;left:727px;top:9px;width:24px;height:22px;border:1px solid #a9c6e4;background:#fff"><div style="position:absolute;left:4px;top:5px;width:13px;height:9px;line-height:0"><svg width="13" height="9" viewBox="0 0 13 9"><path d="M0.7 4.5C2.2 1.9 4.2 0.7 6.5 0.7S10.8 1.9 12.3 4.5C10.8 7.1 8.8 8.3 6.5 8.3S2.2 7.1 0.7 4.5Z" fill="none" stroke="#000" stroke-width="1.3"/><circle cx="6.5" cy="4.2" r="2.7" fill="#000"/><circle cx="5.6" cy="3.2" r="0.8" fill="#fff"/></svg></div></div>
<div style="position:absolute;left:754px;top:9px;width:23px;height:22px;border:1px solid #a9c6e4;background:#fff"><div style="position:absolute;left:5px;top:5px;width:11px;height:10px;line-height:0"><svg width="11" height="10" viewBox="0 0 11 10"><path d="M4.2 0H6.8V3.4H9.2L5.5 7.1 1.8 3.4H4.2Z" fill="#000"/><path d="M0 6.9H4.4L5.5 7.9 6.6 6.9H11V10H0Z" fill="#000"/><rect x="8.6" y="8" width="1.2" height="1" fill="#fff"/></svg></div></div>
<div style="position:absolute;left:780px;top:9px;width:21px;height:22px;border:1px solid #a9c6e4;background:#fff"><div style="position:absolute;left:5px;top:5px;width:9px;height:10px;line-height:0"><svg width="9" height="10" viewBox="0 0 9 10"><path d="M0 2.2L0.8 0.8H3L3.4 0H5.8L6.2 0.8H9V2.2Z" fill="#000"/><path d="M0.8 2.2H9V10H0.8Z" fill="#000"/><rect x="3.3" y="3.4" width="1" height="5.2" fill="#fff"/><rect x="5.6" y="3.4" width="1" height="5.2" fill="#fff"/></svg></div></div>
<div style="position:absolute;left:804px;top:9px;width:22px;height:22px;border:1px solid #a9c6e4;background:#fff"><div style="position:absolute;left:4px;top:5px;width:11px;height:10px;line-height:0"><svg width="11" height="10" viewBox="0 0 11 10"><path d="M2.6 2.4A4 4 0 1 1 3 8.4" fill="none" stroke="#000" stroke-width="1.8"/><path d="M0.6 0.4L4.6 3.6 0.6 4.4Z" fill="#000"/><path d="M6.4 3V5.6H4.6" fill="none" stroke="#000" stroke-width="1.4"/></svg></div></div>
<span class="t" style="left:856px">9.4 sec</span>
<span class="t" style="left:934px;letter-spacing:1.1px">vinay</span>
<span class="t" style="left:1036px;letter-spacing:0.2px">1/20/2022, 2:36:3…</span>
<span class="t" style="left:1166px;letter-spacing:1.3px">/Root</span>
</div>
<div class="row" style="top:479px">
<svg style="position:absolute;left:53px;top:8px" width="18" height="20" viewBox="0 0 18 20">
<path d="M0 2.4C0 1 4 0 9 0S18 1 18 2.4V17.6C18 19 14 20 9 20S0 19 0 17.6Z" fill="#3b86c6"/>
<path d="M0 4.4C3 6.3 15 6.3 18 4.4M0 9C3 10.9 15 10.9 18 9M0 13.6C3 15.5 15 15.5 18 13.6" stroke="#fff" stroke-width="1" fill="none"/>
<circle cx="14.2" cy="14.2" r="5.2" fill="#fff"/>
<path d="M11.4 12.6C12.4 11.9 13.6 12.2 13.4 13.2 13.2 14.2 12.2 15 11.8 16.3M12.2 14.3H14.2M14.6 12.3V16.2M14.6 12.3C16.8 12.1 17.4 13.2 17.2 14.3 17 15.6 15.8 16.3 14.6 16.2" stroke="#3747c8" stroke-width="1.1" fill="none"/>
</svg>
<div style="position:absolute;left:53px;top:35px;width:20px;height:3px;background:#8ce08c"></div>
<span class="t" style="left:83px">vinay#@1/20/2022 8:0…</span>
<span class="t" style="left:251px;letter-spacing:0.9px">QC_6882_CUR</span>
<span class="t q" style="left:379px">QC-Post blend with Resta…</span>
<svg style="position:absolute;left:563px;top:16px" width="12" height="9" viewBox="0 0 12 9"><path d="M1 4.3L4.3 7.4 11 0.9" fill="none" stroke="#0a7d14" stroke-width="2.6"/></svg>
<span class="t lnk" style="left:611px">100</span>
<div style="position:absolute;left:727px;top:9px;width:24px;height:22px;border:1px solid #a9c6e4;background:#fff"><div style="position:absolute;left:4px;top:5px;width:13px;height:9px;line-height:0"><svg width="13" height="9" viewBox="0 0 13 9"><path d="M0.7 4.5C2.2 1.9 4.2 0.7 6.5 0.7S10.8 1.9 12.3 4.5C10.8 7.1 8.8 8.3 6.5 8.3S2.2 7.1 0.7 4.5Z" fill="none" stroke="#000" stroke-width="1.3"/><circle cx="6.5" cy="4.2" r="2.7" fill="#000"/><circle cx="5.6" cy="3.2" r="0.8" fill="#fff"/></svg></div></div>
<div style="position:absolute;left:754px;top:9px;width:23px;height:22px;border:1px solid #a9c6e4;background:#fff"><div style="position:absolute;left:5px;top:5px;width:11px;height:10px;line-height:0"><svg width="11" height="10" viewBox="0 0 11 10"><path d="M4.2 0H6.8V3.4H9.2L5.5 7.1 1.8 3.4H4.2Z" fill="#000"/><path d="M0 6.9H4.4L5.5 7.9 6.6 6.9H11V10H0Z" fill="#000"/><rect x="8.6" y="8" width="1.2" height="1" fill="#fff"/></svg></div></div>
<div style="position:absolute;left:780px;top:9px;width:21px;height:22px;border:1px solid #a9c6e4;background:#fff"><div style="position:absolute;left:5px;top:5px;width:9px;height:10px;line-height:0"><svg width="9" height="10" viewBox="0 0 9 10"><path d="M0 2.2L0.8 0.8H3L3.4 0H5.8L6.2 0.8H9V2.2Z" fill="#000"/><path d="M0.8 2.2H9V10H0.8Z" fill="#000"/><rect x="3.3" y="3.4" width="1" height="5.2" fill="#fff"/><rect x="5.6" y="3.4" width="1" height="5.2" fill="#fff"/></svg></div></div>
<div style="position:absolute;left:804px;top:9px;width:22px;height:22px;border:1px solid #a9c6e4;background:#fff"><div style="position:absolute;left:4px;top:5px;width:11px;height:10px;line-height:0"><svg width="11" height="10" viewBox="0 0 11 10"><path d="M2.6 2.4A4 4 0 1 1 3 8.4" fill="none" stroke="#000" stroke-width="1.8"/><path d="M0.6 0.4L4.6 3.6 0.6 4.4Z" fill="#000"/><path d="M6.4 3V5.6H4.6" fill="none" stroke="#000" stroke-width="1.4"/></svg></div></div>
<span class="t" style="left:856px">8.4 sec</span>
<span class="t" style="left:934px;letter-spacing:1.1px">vinay</span>
<span class="t" style="left:1036px;letter-spacing:0.2px">1/20/2022, 1:41:4…</span>
<span class="t" style="left:1166px;letter-spacing:1.3px">/Root</span>
</div>
<div class="row" style="top:517px">
<svg style="position:absolute;left:53px;top:8px" width="18" height="20" viewBox="0 0 18 20">
<path d="M0 2.4C0 1 4 0 9 0S18 1 18 2.4V17.6C18 19 14 20 9 20S0 19 0 17.6Z" fill="#3b86c6"/>
<path d="M0 4.4C3 6.3 15 6.3 18 4.4M0 9C3 10.9 15 10.9 18 9M0 13.6C3 15.5 15 15.5 18 13.6" stroke="#fff" stroke-width="1" fill="none"/>
<circle cx="14.2" cy="14.2" r="5.2" fill="#fff"/>
<path d="M11.4 12.6C12.4 11.9 13.6 12.2 13.4 13.2 13.2 14.2 12.2 15 11.8 16.3M12.2 14.3H14.2M14.6 12.3V16.2M14.6 12.3C16.8 12.1 17.4 13.2 17.2 14.3 17 15.6 15.8 16.3 14.6 16.2" stroke="#3747c8" stroke-width="1.1" fill="none"/>
</svg>
<div style="position:absolute;left:53px;top:35px;width:20px;height:3px;background:#8ce08c"></div>
<span class="t" style="left:83px">vinay#@1/20/2022 7:5…</span>
<span class="t" style="left:251px;letter-spacing:0.9px">QC_6880_CUR</span>
<span class="t q" style="left:379px">QC-preblend with CSV</span>
<svg style="position:absolute;left:563px;top:16px" width="12" height="9" viewBox="0 0 12 9"><path d="M1 4.3L4.3 7.4 11 0.9" fill="none" stroke="#0a7d14" stroke-width="2.6"/></svg>
<span class="t lnk" style="left:611px">98</span>
<div style="position:absolute;left:727px;top:9px;width:24px;height:22px;border:1px solid #a9c6e4;background:#fff"><div style="position:absolute;left:4px;top:5px;width:13px;height:9px;line-height:0"><svg width="13" height="9" viewBox="0 0 13 9"><path d="M0.7 4.5C2.2 1.9 4.2 0.7 6.5 0.7S10.8 1.9 12.3 4.5C10.8 7.1 8.8 8.3 6.5 8.3S2.2 7.1 0.7 4.5Z" fill="none" stroke="#000" stroke-width="1.3"/><circle cx="6.5" cy="4.2" r="2.7" fill="#000"/><circle cx="5.6" cy="3.2" r="0.8" fill="#fff"/></svg></div></div>
<div style="position:absolute;left:754px;top:9px;width:23px;height:22px;border:1px solid #a9c6e4;background:#fff"><div style="position:absolute;left:5px;top:5px;width:11px;height:10px;line-height:0"><svg width="11" height="10" viewBox="0 0 11 10"><path d="M4.2 0H6.8V3.4H9.2L5.5 7.1 1.8 3.4H4.2Z" fill="#000"/><path d="M0 6.9H4.4L5.5 7.9 6.6 6.9H11V10H0Z" fill="#000"/><rect x="8.6" y="8" width="1.2" height="1" fill="#fff"/></svg></div></div>
<div style="position:absolute;left:780px;top:9px;width:21px;height:22px;border:1px solid #a9c6e4;background:#fff"><div style="position:absolute;left:5px;top:5px;width:9px;height:10px;line-height:0"><svg width="9" height="10" viewBox="0 0 9 10"><path d="M0 2.2L0.8 0.8H3L3.4 0H5.8L6.2 0.8H9V2.2Z" fill="#000"/><path d="M0.8 2.2H9V10H0.8Z" fill="#000"/><rect x="3.3" y="3.4" width="1" height="5.2" fill="#fff"/><rect x="5.6" y="3.4" width="1" height="5.2" fill="#fff"/></svg></div></div>
<div style="position:absolute;left:804px;top:9px;width:22px;height:22px;border:1px solid #a9c6e4;background:#fff"><div style="position:absolute;left:4px;top:5px;width:11px;height:10px;line-height:0"><svg width="11" height="10" viewBox="0 0 11 10"><path d="M2.6 2.4A4 4 0 1 1 3 8.4" fill="none" stroke="#000" stroke-width="1.8"/><path d="M0.6 0.4L4.6 3.6 0.6 4.4Z" fill="#000"/><path d="M6.4 3V5.6H4.6" fill="none" stroke="#000" stroke-width="1.4"/></svg></div></div>
<span class="t" style="left:856px">0.8 sec</span>
<span class="t" style="left:934px;letter-spacing:1.1px">vinay</span>
<span class="t" style="left:1036px;letter-spacing:0.2px">1/20/2022, 1:25:3…</span>
<span class="t" style="left:1166px;letter-spacing:1.3px">/Root</span>
</div>
<div class="row" style="top:555px">
<svg style="position:absolute;left:53px;top:8px" width="18" height="20" viewBox="0 0 18 20">
<path d="M0 2.4C0 1 4 0 9 0S18 1 18 2.4V17.6C18 19 14 20 9 20S0 19 0 17.6Z" fill="#3b86c6"/>
<path d="M0 4.4C3 6.3 15 6.3 18 4.4M0 9C3 10.9 15 10.9 18 9M0 13.6C3 15.5 15 15.5 18 13.6" stroke="#fff" stroke-width="1" fill="none"/>
<circle cx="14.2" cy="14.2" r="5.2" fill="#fff"/>
<path d="M11.4 12.6C12.4 11.9 13.6 12.2 13.4 13.2 13.2 14.2 12.2 15 11.8 16.3M12.2 14.3H14.2M14.6 12.3V16.2M14.6 12.3C16.8 12.1 17.4 13.2 17.2 14.3 17 15.6 15.8 16.3 14.6 16.2" stroke="#3747c8" stroke-width="1.1" fill="none"/>
</svg>
<div style="position:absolute;left:53px;top:35px;width:20px;height:3px;background:#8ce08c"></div>
<span class="t" style="left:83px">vinay#@1/20/2022 7:51…</span>
<span class="t" style="left:251px;letter-spacing:0.9px">QC_6879_CUR</span>
<span class="t q" style="left:379px">vinay 1/20/2022 7:45:46 …</span>
<svg style="position:absolute;left:565px;top:15px" width="10" height="10" viewBox="0 0 10 10"><path d="M1.2 1.2L8.8 8.8M8.8 1.2L1.2 8.8" stroke="#e8141b" stroke-width="2.6"/></svg>
<span class="t" style="left:612px">-</span>
<div style="position:absolute;left:727px;top:9px;width:24px;height:22px;border:1px solid #e8eef6;background:#fff"><div style="position:absolute;left:4px;top:5px;width:13px;height:9px;line-height:0"><svg width="13" height="9" viewBox="0 0 13 9"><path d="M0.7 4.5C2.2 1.9 4.2 0.7 6.5 0.7S10.8 1.9 12.3 4.5C10.8 7.1 8.8 8.3 6.5 8.3S2.2 7.1 0.7 4.5Z" fill="none" stroke="#d9d9d9" stroke-width="1.3"/><circle cx="6.5" cy="4.2" r="2.7" fill="#d9d9d9"/><circle cx="5.6" cy="3.2" r="0.8" fill="#fff"/></svg></div></div>
<div style="position:absolute;left:754px;top:9px;width:23px;height:22px;border:1px solid #e8eef6;background:#fff"><div style="position:absolute;left:5px;top:5px;width:11px;height:10px;line-height:0"><svg width="11" height="10" viewBox="0 0 11 10"><path d="M4.2 0H6.8V3.4H9.2L5.5 7.1 1.8 3.4H4.2Z" fill="#d9d9d9"/><path d="M0 6.9H4.4L5.5 7.9 6.6 6.9H11V10H0Z" fill="#d9d9d9"/><rect x="8.6" y="8" width="1.2" height="1" fill="#fff"/></svg></div></div>
<div style="position:absolute;left:780px;top:9px;width:21px;height:22px;border:1px solid #a9c6e4;background:#fff"><div style="position:absolute;left:5px;top:5px;width:9px;height:10px;line-height:0"><svg width="9" height="10" viewBox="0 0 9 10"><path d="M0 2.2L0.8 0.8H3L3.4 0H5.8L6.2 0.8H9V2.2Z" fill="#000"/><path d="M0.8 2.2H9V10H0.8Z" fill="#000"/><rect x="3.3" y="3.4" width="1" height="5.2" fill="#fff"/><rect x="5.6" y="3.4" width="1" height="5.2" fill="#fff"/></svg></div></div>
<div style="position:absolute;left:804px;top:9px;width:22px;height:22px;border:1px solid #a9c6e4;background:#fff"><div style="position:absolute;left:4px;top:5px;width:11px;height:10px;line-height:0"><svg width="11" height="10" viewBox="0 0 11 10"><path d="M2.6 2.4A4 4 0 1 1 3 8.4" fill="none" stroke="#000" stroke-width="1.8"/><path d="M0.6 0.4L4.6 3.6 0.6 4.4Z" fill="#000"/><path d="M6.4 3V5.6H4.6" fill="none" stroke="#000" stroke-width="1.4"/></svg></div></div>
<span class="t" style="left:856px">0.2 sec</span>
<span class="t" style="left:934px;letter-spacing:1.1px">vinay</span>
<span class="t" style="left:1036px;letter-spacing:0.2px">1/20/2022, 1:21:34…</span>
<span class="t" style="left:1166px;letter-spacing:1.3px">/Root</span>
</div>
<div class="row" style="top:593px">
<svg style="position:absolute;left:53px;top:8px" width="18" height="20" viewBox="0 0 18 20">
<path d="M0 2.4C0 1 4 0 9 0S18 1 18 2.4V17.6C18 19 14 20 9 20S0 19 0 17.6Z" fill="#3b86c6"/>
<path d="M0 4.4C3 6.3 15 6.3 18 4.4M0 9C3 10.9 15 10.9 18 9M0 13.6C3 15.5 15 15.5 18 13.6" stroke="#fff" stroke-width="1" fill="none"/>
<circle cx="14.2" cy="14.2" r="5.2" fill="#fff"/>
<path d="M11.4 12.6C12.4 11.9 13.6 12.2 13.4 13.2 13.2 14.2 12.2 15 11.8 16.3M12.2 14.3H14.2M14.6 12.3V16.2M14.6 12.3C16.8 12.1 17.4 13.2 17.2 14.3 17 15.6 15.8 16.3 14.6 16.2" stroke="#3747c8" stroke-width="1.1" fill="none"/>
</svg>
<div style="position:absolute;left:53px;top:35px;width:20px;height:3px;background:#8ce08c"></div>
<span class="t" style="left:83px">vinay#@1/20/2022 7:3…</span>
<span class="t" style="left:251px;letter-spacing:0.9px">QC_6878_CUR</span>
<span class="t q" style="left:379px">QC as Union with Existing…</span>
<svg style="position:absolute;left:563px;top:16px" width="12" height="9" viewBox="0 0 12 9"><path d="M1 4.3L4.3 7.4 11 0.9" fill="none" stroke="#0a7d14" stroke-width="2.6"/></svg>
<span class="t lnk" style="left:611px">1715</span>
<div style="position:absolute;left:727px;top:9px;width:24px;height:22px;border:1px solid #a9c6e4;background:#fff"><div style="position:absolute;left:4px;top:5px;width:13px;height:9px;line-height:0"><svg width="13" height="9" viewBox="0 0 13 9"><path d="M0.7 4.5C2.2 1.9 4.2 0.7 6.5 0.7S10.8 1.9 12.3 4.5C10.8 7.1 8.8 8.3 6.5 8.3S2.2 7.1 0.7 4.5Z" fill="none" stroke="#000" stroke-width="1.3"/><circle cx="6.5" cy="4.2" r="2.7" fill="#000"/><circle cx="5.6" cy="3.2" r="0.8" fill="#fff"/></svg></div></div>
<div style="position:absolute;left:754px;top:9px;width:23px;height:22px;border:1px solid #a9c6e4;background:#fff"><div style="position:absolute;left:5px;top:5px;width:11px;height:10px;line-height:0"><svg width="11" height="10" viewBox="0 0 11 10"><path d="M4.2 0H6.8V3.4H9.2L5.5 7.1 1.8 3.4H4.2Z" fill="#000"/><path d="M0 6.9H4.4L5.5 7.9 6.6 6.9H11V10H0Z" fill="#000"/><rect x="8.6" y="8" width="1.2" height="1" fill="#fff"/></svg></div></div>
<div style="position:absolute;left:780px;top:9px;width:21px;height:22px;border:1px solid #a9c6e4;background:#fff"><div style="position:absolute;left:5px;top:5px;width:9px;height:10px;line-height:0"><svg width="9" height="10" viewBox="0 0 9 10"><path d="M0 2.2L0.8 0.8H3L3.4 0H5.8L6.2 0.8H9V2.2Z" fill="#000"/><path d="M0.8 2.2H9V10H0.8Z" fill="#000"/><rect x="3.3" y="3.4" width="1" height="5.2" fill="#fff"/><rect x="5.6" y="3.4" width="1" height="5.2" fill="#fff"/></svg></div></div>
<div style="position:absolute;left:804px;top:9px;width:22px;height:22px;border:1px solid #a9c6e4;background:#fff"><div style="position:absolute;left:4px;top:5px;width:11px;height:10px;line-height:0"><svg width="11" height="10" viewBox="0 0 11 10"><path d="M2.6 2.4A4 4 0 1 1 3 8.4" fill="none" stroke="#000" stroke-width="1.8"/><path d="M0.6 0.4L4.6 3.6 0.6 4.4Z" fill="#000"/><path d="M6.4 3V5.6H4.6" fill="none" stroke="#000" stroke-width="1.4"/></svg></div></div>
<span class="t" style="left:856px">1.4 sec</span>
<span class="t" style="left:934px;letter-spacing:1.1px">vinay</span>
<span class="t" style="left:1036px;letter-spacing:0.2px">1/20/2022, 1:10:18…</span>
<span class="t" style="left:1166px;letter-spacing:1.3px">/Root</span>
</div>
</div>

<!-- ============ STATUS ============ -->
<div id="status">
  <span class="abs" style="left:16px;top:5px;font-size:12px;line-height:14px;color:#333">Ready</span>
  <span class="abs" style="left:1187px;top:5px;font-size:12px;line-height:14px;color:#333;white-space:nowrap">2022 © RightData Inc.</span>
</div>
<div id="bottom"></div>
<div class="abs" style="left:1323px;top:626px;width:34px;height:25px;background:linear-gradient(#dcdcdc,#d6d6d6);border:1px solid #e6e6e6;box-shadow:0 1px 2px rgba(0,0,0,.15)"></div>
<svg class="abs" style="left:1334px;top:635px" width="13" height="9" viewBox="0 0 13 9"><path d="M1.4 7.6L6.5 2.4 11.6 7.6" fill="none" stroke="#111" stroke-width="2.6"/></svg>
<div id="red"></div>

</div></body></html>
